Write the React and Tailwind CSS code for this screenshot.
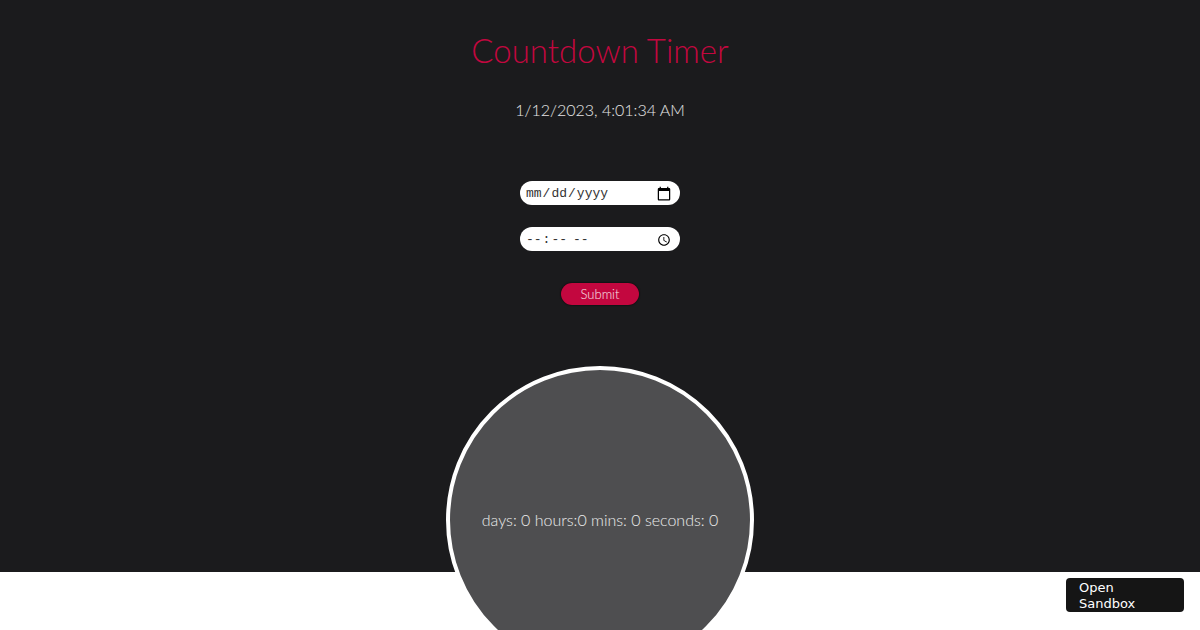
import { useState } from 'react';

const inputClass =
    "h-6 w-40 rounded-full bg-white px-1.5 pt-0.5 font-['Liberation_Mono',monospace] text-[13px] text-[#333] focus:outline-none [&::-webkit-datetime-edit]:-ml-px";

export default function App() {
    const [date, setDate] = useState('');
    const [time, setTime] = useState('');

    const handleSubmit = (e) => {
        e.preventDefault();
    };

    return (
        <div className="flex h-screen flex-col overflow-hidden bg-white font-['Lato',sans-serif] font-light">
            <main className="relative z-10 flex min-h-0 flex-1 flex-col items-center bg-[#1b1b1d] pt-7 text-white">
                <h1 className="text-[33px] leading-11 text-[#c3073f]">Countdown Timer</h1>
                <p className="mt-6.5 text-base text-white/90">1/12/2023, 4:01:34 AM</p>

                <form onSubmit={handleSubmit} className="mt-[59px] flex flex-col items-center">
                    <input
                        type="date"
                        aria-label="Date"
                        value={date}
                        onChange={(e) => setDate(e.target.value)}
                        className={`${inputClass} [&::-webkit-calendar-picker-indicator]:size-4`}
                    />
                    <input
                        type="time"
                        aria-label="Time"
                        value={time}
                        onChange={(e) => setTime(e.target.value)}
                        className={`${inputClass} mt-5.5`}
                    />
                    <button
                        type="submit"
                        className="mt-8 h-5.5 w-[78px] rounded-full bg-[#c3073f] text-[13px] leading-5 text-white/90 shadow-[0_0_2px_black]"
                    >
                        Submit
                    </button>
                </form>

                {/* Remaining time */}
                <div className="mt-[61px] flex size-[308px] shrink-0 items-center justify-center rounded-full border-4 border-white bg-[#4e4e50]">
                    <p className="text-base text-white/90">days: 0 hours:0 mins: 0 seconds: 0</p>
                </div>
            </main>

            <footer className="flex justify-end px-4 pt-1.5 pb-4.5">
                <button
                    type="button"
                    className="h-8.5 w-[118px] rounded bg-[#151515] pt-0.5 pr-10 pl-[13px] text-left font-['DejaVu_Sans',sans-serif] text-[13px] leading-4 font-normal text-white"
                >
                    Open Sandbox
                </button>
            </footer>
        </div>
    );
}
